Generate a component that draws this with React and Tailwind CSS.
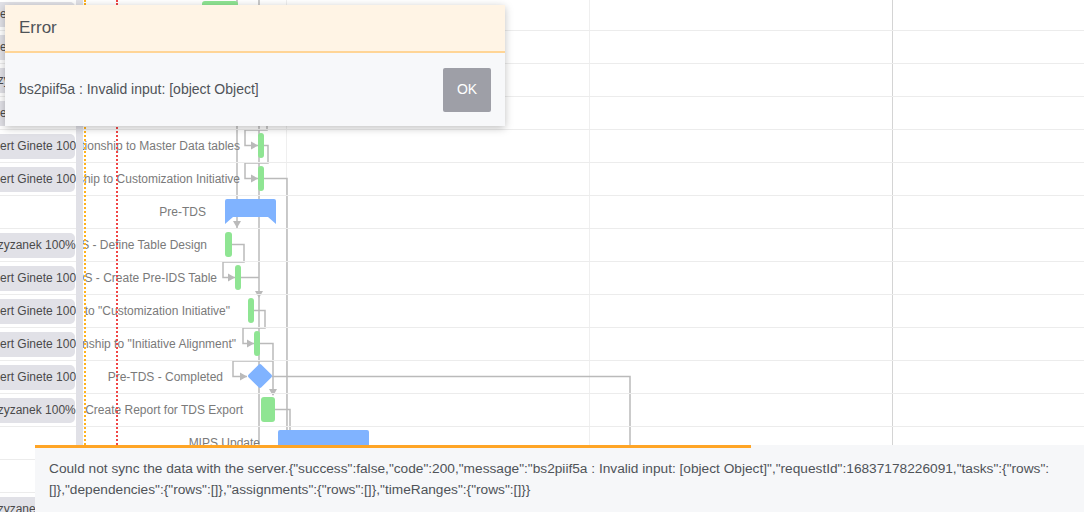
import React from 'react';

const TL = 83; // timeline left edge on the page

const rows = [
  { res: 'g', label: 'Kick-off', end: 184, bar: { type: 'task', from: 202, to: 238 } },
  { res: 'g', label: 'IDS - Scope', end: 222, bar: { type: 'task', from: 240, to: 246 } },
  { res: 'k', label: 'IDS - Review', end: 226, bar: { type: 'task', from: 244, to: 250 } },
  { res: 'g', label: 'IDS - Define Tables', end: 238, bar: { type: 'task', from: 256, to: 262 } },
  { res: 'g', label: 'IDS - Define Relationship to Master Data tables', end: 240, bar: { type: 'task', from: 258, to: 264 } },
  { res: 'g', label: 'IDS - Define Relationship to Customization Initiative', end: 240, bar: { type: 'task', from: 258, to: 264 } },
  { res: null, label: 'Pre-TDS', end: 206, bar: { type: 'parent', from: 225, to: 276 } },
  { res: 'k', label: 'Pre-TDS - Define Table Design', end: 207, bar: { type: 'task', from: 225, to: 232 } },
  { res: 'g', label: 'Pre-TDS - Create Pre-IDS Table', end: 217, bar: { type: 'task', from: 235, to: 241 } },
  { res: 'g', label: 'Define Relationship to "Customization Initiative"', end: 230, bar: { type: 'task', from: 248, to: 254 } },
  { res: 'g', label: 'Define Relationship to "Initiative Alignment"', end: 236, bar: { type: 'task', from: 254, to: 260 } },
  { res: 'g', label: 'Pre-TDS - Completed', end: 223, bar: { type: 'milestone', at: 259.5 } },
  { res: 'k', label: 'Create Report for TDS Export', end: 243, bar: { type: 'task', from: 261, to: 275 } },
  { res: null, label: 'MIPS Update', end: 260, bar: { type: 'parent', from: 278, to: 369 } },
  { res: null },
  { res: 'k' },
];

const deps = [
  'M237 0 V228',
  'M262 112 H267 V130 H245 V145.5 H258',
  'M264 145.5 H268 V163 H245 V178.5 H258',
  'M264 178.5 H287 V430',
  'M232 244.5 H244 V262 H223 V277.5 H235',
  'M241 277.5 H259',
  'M259 0 V450',
  'M254 310.5 H265 V328 H243 V343.5 H254',
  'M260 343.5 H273 V395',
  'M273 361 H233 V376.5 H247',
  'M272 376.5 H630 V450',
  'M275 409.5 H290 V430',
];

const downArrows = [[237, 228], [259, 298], [273, 396]];
const rightArrows = [[258, 145.5], [258, 178.5], [235, 277.5], [254, 343.5], [247, 376.5]];

const Resource = ({ res }) => {
  if (!res) return null;
  return (
    <div className="-ml-[40px] w-[115px] h-[25px] rounded-r-[5px] bg-[#e1e1e7] flex items-center whitespace-nowrap text-[12px] text-[#4a4a4a]">
      {res === 'g' ? (
        <span className="pl-[18px]">Robert Ginete 100%</span>
      ) : (
        <span className="pl-[3px]">Jan Krzyzanek 100%</span>
      )}
    </div>
  );
};

const Bar = ({ bar }) => {
  if (!bar) return null;
  if (bar.type === 'milestone') {
    return (
      <div
        className="absolute top-[6px] w-[18px] h-[18px] rotate-45 rounded-[2px] bg-[#80b3ff]"
        style={{ left: bar.at - TL - 9 }}
      />
    );
  }
  const w = bar.to - bar.from;
  if (bar.type === 'parent') {
    return (
      <svg className="absolute top-[3px]" width={w} height={25} style={{ left: bar.from - TL }}>
        <path d={`M0 2 Q0 0 2 0 H${w - 2} Q${w} 0 ${w} 2 V25 L${w - 8} 18 H8 L0 25 Z`} fill="#80b3ff" />
      </svg>
    );
  }
  return (
    <div
      className="absolute top-[3px] h-[25px] rounded-[3px] bg-[#8fe593]"
      style={{ left: bar.from - TL, width: w }}
    />
  );
};

export default function App() {
  return (
    <div className="relative w-[1084px] h-[512px] overflow-hidden bg-white font-['Liberation_Sans',Arial,sans-serif]">
      <div className="flex h-full">
        {/* resource column */}
        <div className="w-[76px] shrink-0 overflow-hidden">
          <div className="-mt-[2px]">
            {rows.map((r, i) => (
              <div key={i} className="h-[33px] border-b border-[#ececec] flex items-center">
                <Resource res={r.res} />
              </div>
            ))}
          </div>
        </div>

        {/* splitter */}
        <div className="w-[7px] shrink-0 bg-[#e1e1e7]" />

        {/* timeline */}
        <div className="relative flex-1 overflow-hidden">
          <div className="absolute inset-0 flex">
            <div className="w-[204px] border-r border-[#efefef]" />
            <div className="w-[303px] border-r border-[#efefef]" />
            <div className="w-[303px] border-r border-[#d4d4d4]" />
            <div className="flex-1" />
          </div>

          <svg className="absolute inset-0 w-full h-full">
            <g transform={`translate(${-TL} 0)`} fill="none" stroke="#bababa" strokeWidth="1.5">
              {deps.map((d, i) => (
                <path key={i} d={d} />
              ))}
            </g>
            <g transform={`translate(${-TL} 0)`} fill="#bababa">
              {downArrows.map(([x, y], i) => (
                <polygon key={i} points={`${x - 4},${y - 7} ${x + 4},${y - 7} ${x},${y}`} />
              ))}
              {rightArrows.map(([x, y], i) => (
                <polygon key={i} points={`${x - 7},${y - 4} ${x - 7},${y + 4} ${x},${y}`} />
              ))}
            </g>
          </svg>

          <div className="relative -mt-[2px]">
            {rows.map((r, i) => (
              <div key={i} className="relative h-[33px] border-b border-[#ececec]">
                {r.label && (
                  <div
                    className="absolute top-0 h-full flex items-center -translate-x-full whitespace-nowrap text-[12px] text-[#7a7a7a]"
                    style={{ left: r.end - TL }}
                  >
                    {r.label}
                  </div>
                )}
                <Bar bar={r.bar} />
              </div>
            ))}
          </div>

          <div className="absolute top-0 bottom-0 left-[1px] border-l-2 border-dotted border-[#ffb21e]" />
          <div className="absolute top-0 bottom-0 left-[33px] border-l-2 border-dotted border-[#f04545]" />
        </div>
      </div>

      {/* error dialog */}
      <div className="absolute left-[5px] top-[5px] w-[500px] h-[121px] flex flex-col bg-[#f7f8fa] shadow-[0_2px_8px_rgba(0,0,0,0.25)]">
        <div className="h-[48px] shrink-0 flex items-center px-[14px] bg-[#fff4e5] border-b-2 border-[#ffd596] text-[17px] text-[#4f5358]">
          Error
        </div>
        <div className="flex-1 flex items-center justify-between pl-[14px] pr-[14px]">
          <span className="text-[14px] text-[#4f5358]">bs2piif5a : Invalid input: [object Object]</span>
          <button className="w-[48px] h-[44px] rounded-[2px] bg-[#9e9fa7] text-white text-[14px]">OK</button>
        </div>
      </div>

      {/* toast */}
      <div className="absolute left-[35px] top-[445px] right-0 bottom-0 bg-[#f6f7f9]">
        <div className="h-[3px] w-[716px] bg-[#ffa526]" />
        <div className="pt-[10px] pl-[14px] text-[13.7px] leading-[21px] text-[#4f5358] whitespace-nowrap">
          <div>Could not sync the data with the server.{'{"success":false,"code":200,"message":"bs2piif5a : Invalid input: [object Object]","requestId":16837178226091,"tasks":{"rows":'}</div>
          <div>{'[]},"dependencies":{"rows":[]},"assignments":{"rows":[]},"timeRanges":{"rows":[]}}'}</div>
        </div>
      </div>
    </div>
  );
}
